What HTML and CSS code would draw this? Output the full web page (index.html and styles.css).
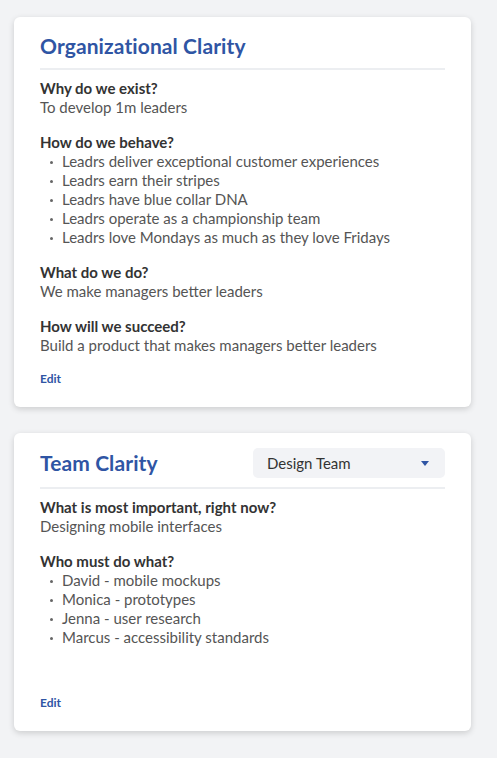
FILE: index.html
```html
<!DOCTYPE html>
<html lang="en">
<head>
<meta charset="utf-8">
<title>Clarity</title>
<link rel="stylesheet" href="styles.css">
</head>
<body>
<main class="page">
  <section class="card">
    <header class="card-head">
      <h1 class="card-title">Organizational Clarity</h1>
    </header>
    <div class="card-body">
      <div class="block">
        <h2 class="q">Why do we exist?</h2>
        <p class="a">To develop 1m leaders</p>
      </div>
      <div class="block">
        <h2 class="q">How do we behave?</h2>
        <ul class="list">
          <li>Leadrs deliver exceptional customer experiences</li>
          <li>Leadrs earn their stripes</li>
          <li>Leadrs have blue collar DNA</li>
          <li>Leadrs operate as a championship team</li>
          <li>Leadrs love Mondays as much as they love Fridays</li>
        </ul>
      </div>
      <div class="block">
        <h2 class="q">What do we do?</h2>
        <p class="a">We make managers better leaders</p>
      </div>
      <div class="block">
        <h2 class="q">How will we succeed?</h2>
        <p class="a">Build a product that makes managers better leaders</p>
      </div>
    </div>
    <a class="edit" href="#">Edit</a>
  </section>

  <section class="card card-team">
    <header class="card-head">
      <h1 class="card-title">Team Clarity</h1>
      <div class="select">
        <span class="select-label">Design Team</span>
        <svg class="caret" width="8" height="5" viewBox="0 0 8 5"><path d="M0 0H8L4 5Z" fill="#2f55a4"/></svg>
      </div>
    </header>
    <div class="card-body team-body">
      <div class="block">
        <h2 class="q">What is most important, right now?</h2>
        <p class="a">Designing mobile interfaces</p>
      </div>
      <div class="block">
        <h2 class="q">Who must do what?</h2>
        <ul class="list">
          <li>David - mobile mockups</li>
          <li>Monica - prototypes</li>
          <li>Jenna - user research</li>
          <li>Marcus - accessibility standards</li>
        </ul>
      </div>
    </div>
    <a class="edit" href="#">Edit</a>
  </section>
</main>
</body>
</html>
```
FILE: styles.css
```css
* { box-sizing: border-box; }
html, body { margin: 0; padding: 0; }
body {
  background: #f2f3f5;
  font-family: "Lato", "Liberation Sans", sans-serif;
  color: #555;
}
.page {
  padding: 17px 26px 28px 14px;
  display: flex;
  flex-direction: column;
  gap: 26px;
}
.card {
  background: #fff;
  border-radius: 6px;
  box-shadow: 0 2px 6px rgba(0, 0, 0, 0.16);
  padding: 0 26px 20px 26px;
  display: flex;
  flex-direction: column;
}
.card-head {
  display: flex;
  align-items: center;
  justify-content: space-between;
  border-bottom: 2px solid #eceef1;
  padding: 17px 0 10px;
}
.card-team .card-head { padding: 15px 0 9px; }
.card-title {
  margin: 0;
  font-size: 21px;
  line-height: 24px;
  font-weight: 700;
  color: #2f55a4;
  letter-spacing: 0.1px;
}
.select {
  width: 192px;
  height: 30px;
  background: #f2f3f6;
  border-radius: 5px;
  display: flex;
  align-items: center;
  justify-content: space-between;
  padding: 0 16px 0 14px;
}
.select-label {
  font-size: 15px;
  color: #333;
}
.card-body {
  display: flex;
  flex-direction: column;
  gap: 16px;
  padding-top: 9px;
}
.team-body { min-height: 190px; }
.block { display: flex; flex-direction: column; }
.q {
  margin: 0;
  font-size: 15px;
  line-height: 19px;
  font-weight: 700;
  color: #333;
}
.a {
  margin: 0;
  font-size: 15px;
  line-height: 19px;
  color: #555;
}
.list {
  margin: 0;
  padding: 0 0 0 22px;
  list-style: none;
}
.list li {
  font-size: 15px;
  line-height: 19px;
  position: relative;
}
.list li::before {
  content: "";
  position: absolute;
  left: -12px;
  top: 9px;
  width: 3px;
  height: 3px;
  border-radius: 50%;
  background: #666;
}
.edit {
  margin-top: 16px;
  font-size: 12px;
  font-weight: 700;
  color: #2f55a4;
  text-decoration: none;
  line-height: 16px;
  align-self: flex-start;
}
```
